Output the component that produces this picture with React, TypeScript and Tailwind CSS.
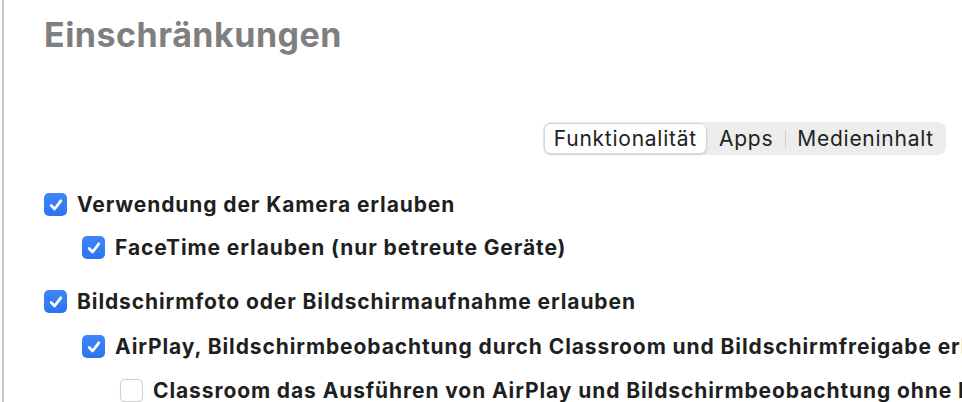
import React from "react";

function Check({ checked }: { checked: boolean }) {
  if (checked) {
    return (
      <div className="w-[23px] h-[23px] rounded-[5px] bg-gradient-to-b from-[#3f86f8] to-[#2c73f3] flex items-center justify-center shrink-0">
        <svg width="16" height="16" viewBox="0 0 16 16" fill="none">
          <path d="M3.2 8.6 L6.6 12 L12.8 3.8" stroke="white" strokeWidth="2.8" strokeLinecap="round" strokeLinejoin="round" />
        </svg>
      </div>
    );
  }
  return <div className="w-[23px] h-[23px] rounded-[5px] bg-white border border-[#d0d0d0] shadow-[0_0.5px_1px_rgba(0,0,0,0.1)] shrink-0" />;
}

function Row({ level, checked, label, className }: { level: number; checked: boolean; label: string; className: string }) {
  const pad = level === 0 ? "pl-[40px]" : level === 1 ? "pl-[78px]" : "pl-[116px]";
  return (
    <div className={`flex items-center gap-[10px] whitespace-nowrap ${pad} ${className}`}>
      <Check checked={checked} />
      <span className="text-[21px] font-bold text-[#1f1f1f] leading-none tracking-[0.9px]">{label}</span>
    </div>
  );
}

export default function App() {
  return (
    <div className="w-[962px] h-[402px] overflow-hidden bg-white flex" style={{ fontFamily: "Inter, 'Liberation Sans', sans-serif" }}>
      <div className="ml-[2px] w-[2px] h-full bg-[#c6c6cc] shrink-0" />
      <div className="flex-1 flex flex-col min-w-0">
        <h1 className="pl-[40px] pt-[15px] text-[34px] font-bold text-[#7f7f7f] leading-[40px] tracking-[0.5px]">Einschränkungen</h1>
        <div className="flex justify-end pr-[16px] mt-[67px]">
          <div className="flex items-center h-[33px] rounded-[8px] bg-[#ededed] p-[1px] text-[21px] tracking-[0.75px] text-[#222222]">
            <div className="h-full flex items-center px-[9px] bg-white rounded-[7px] border border-[#d6d6d6] shadow-[0_1px_2px_rgba(0,0,0,0.12)]">Funktionalität</div>
            <div className="h-full flex items-center px-[12px]">Apps</div>
            <div className="w-px h-[18px] bg-[#cfcfcf]" />
            <div className="h-full flex items-center px-[11px]">Medieninhalt</div>
          </div>
        </div>
        <Row level={0} checked label="Verwendung der Kamera erlauben" className="mt-[38px]" />
        <Row level={1} checked label="FaceTime erlauben (nur betreute Geräte)" className="mt-[20px]" />
        <Row level={0} checked label="Bildschirmfoto oder Bildschirmaufnahme erlauben" className="mt-[31px]" />
        <Row level={1} checked label="AirPlay, Bildschirmbeobachtung durch Classroom und Bildschirmfreigabe erlauben" className="mt-[22px]" />
        <Row level={2} checked={false} label="Classroom das Ausführen von AirPlay und Bildschirmbeobachtung ohne Nachfrage erlauben" className="mt-[21px]" />
      </div>
    </div>
  );
}
